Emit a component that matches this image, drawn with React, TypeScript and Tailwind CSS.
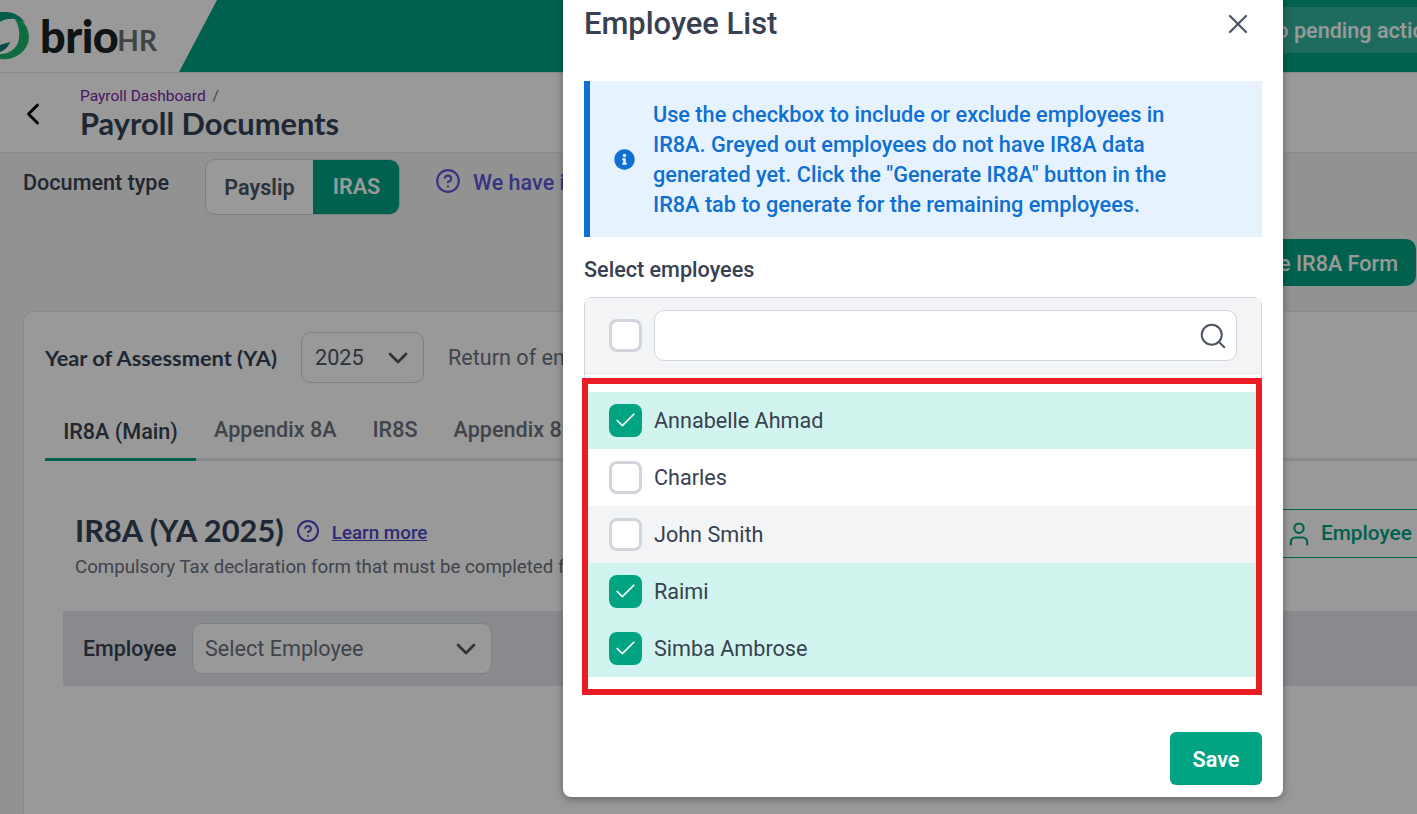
import { Check, ChevronDown, ChevronLeft, CircleHelp, Search, User, X } from "lucide-react";
import { FaInfoCircle } from "react-icons/fa";

const rows = [
  { name: "Annabelle Ahmad", on: true, bg: "bg-[#d1f5ee]" },
  { name: "Charles", on: false, bg: "bg-white" },
  { name: "John Smith", on: false, bg: "bg-[#f3f4f6]" },
  { name: "Raimi", on: true, bg: "bg-[#d1f5ee]" },
  { name: "Simba Ambrose", on: true, bg: "bg-[#d1f5ee]" },
];

function Box({ on }: { on: boolean }) {
  if (on) {
    return (
      <span className="flex h-[33px] w-[33px] shrink-0 items-center justify-center rounded-lg bg-[#00a482]">
        <Check size={25} strokeWidth={1.6} className="text-white" />
      </span>
    );
  }
  return <span className="h-[33px] w-[33px] shrink-0 rounded-lg border-[3px] border-[#d1d5db] bg-white" />;
}

function Logo() {
  return (
    <div className="flex items-center">
      <svg width="30" height="48" viewBox="0 6 30 48" className="shrink-0">
        <path d="M0 6C10 5 20 8 25 17C18 12 8 11 0 16Z" fill="#0a9a7c" />
        <path d="M14 12C26 14 31 26 28 37C24 48 12 55 0 53L0 48C10 48 18 42 19 32C20 24 18 17 14 12Z" fill="#19b56d" />
        <path d="M0 39L10 36C8 42 3 45 0 46Z" fill="#0b7a73" />
      </svg>
      <span className="ml-[10px] font-['Lato',sans-serif] text-[45px] leading-none font-black tracking-[-0.5px] text-[#1a2224]">brio</span>
      <span className="-ml-[1px] mt-[8px] font-['Lato',sans-serif] text-[28px] leading-none font-bold text-[#6b7070]">HR</span>
    </div>
  );
}

export default function App() {
  return (
    <div className="relative h-[814px] w-[1417px] overflow-hidden bg-[#f3f4f6] font-['Roboto',sans-serif]">
      <header className="flex h-[73px] border-b border-[#e5e7eb] bg-[#00a383]">
        <div className="flex h-[72px] w-[217px] shrink-0 items-center bg-white [clip-path:polygon(0_0,100%_0,82.5%_100%,0_100%)]">
          <Logo />
        </div>
        <div className="mt-[7px] ml-[1043px] flex h-[46px] w-[220px] shrink-0 items-center bg-white/20 pt-[2px] pl-[1px] text-[21.6px] font-medium whitespace-nowrap text-white">
          No pending actions
        </div>
      </header>

      <div className="flex h-[80px] items-center border-b border-[#e5e7eb] bg-white pl-[24px]">
        <ChevronLeft size={36} strokeWidth={2} className="-ml-[9px] mt-[2px] text-black" />
        <div className="mt-[3px] ml-[29px]">
          <div className="text-[15.5px] leading-[18px] text-[#7e22a8]">
            Payroll Dashboard <span className="ml-[3px] text-[#6b7280]">/</span>
          </div>
          <div className="pt-[1px] font-['Lato',sans-serif] text-[30.8px] leading-[36px] font-bold text-[#334155]">Payroll Documents</div>
        </div>
      </div>

      <div className="flex pt-[6px] pl-[23px]">
        <div className="mt-[10px] w-[182px] text-[21.6px] leading-[28px] font-medium text-[#374151]">Document type</div>
        <div className="flex h-[56px] overflow-hidden rounded-[10px] border border-[#d1d5db] bg-white pt-[1px] text-[21.6px] font-semibold">
          <div className="flex w-[107px] items-center justify-center pt-[1px] text-[#4b5563]">Payslip</div>
          <div className="-mt-[2px] -mr-px -mb-px flex w-[87px] items-center justify-center bg-[#00a482] pt-[1px] text-white">IRAS</div>
        </div>
        <CircleHelp size={26} strokeWidth={2} className="mt-[9px] ml-[35px] text-[#5f57d6]" />
        <div className="mt-[10px] ml-[12px] text-[21.6px] leading-[28px] font-medium text-[#5f57d6]">We have i</div>
      </div>

      <div className="mt-[24px] flex justify-end pr-[1px]">
        <div className="flex h-[47px] w-[220px] items-center justify-end rounded-[10px] bg-[#00a482] pt-[3px] pr-[18px] text-[21.6px] font-medium whitespace-nowrap text-white">Generate IR8A Form</div>
      </div>

      <div className="mt-[25px] ml-[23px] w-[1450px] rounded-t-[10px] border border-[#e5e7eb] bg-white pt-[20px] pl-[21px]">
        <div className="flex items-center">
          <div className="w-[256px] pt-[2px] font-['Lato',sans-serif] text-[21.8px] font-bold whitespace-nowrap text-[#334155]">Year of Assessment (YA)</div>
          <div className="flex h-[51px] w-[123px] items-center justify-between rounded-[10px] border border-[#d1d5db] pr-[9px] pl-[13px] text-[21.6px] text-[#4b5563]">
            <span className="pt-[2px]">2025</span> <ChevronDown size={32} strokeWidth={2} className="text-[#4b5563]" />
          </div>
          <div className="ml-[24px] pt-[2px] text-[21.6px] whitespace-nowrap text-[#6b7280]">Return of employee</div>
        </div>

        <div className="mt-[28px] mr-[50px] flex h-[50px] border-b-[3px] border-[#e5e7eb] pb-[8px] text-[21.6px] font-medium text-[#6b7280]">
          <div className="-mb-[11px] flex w-[151px] justify-center border-b-[3px] border-[#00a482] pt-[5px] text-[#374151]">IR8A (Main)</div>
          <div className="ml-[18px] flex items-center">Appendix 8A</div>
          <div className="ml-[36px] flex items-center">IR8S</div>
          <div className="ml-[36px] flex items-center">Appendix 8B</div>
        </div>

        <div className="mt-[48px] flex pl-[30px]">
          <div className="w-[1195px] shrink-0">
            <div className="-mt-[3px] flex h-[50px] items-center">
              <span className="font-['Lato',sans-serif] text-[30.8px] font-bold text-[#334155]">IR8A (YA 2025)</span>
              <CircleHelp size={24} strokeWidth={2} className="ml-[12px] text-[#4f46c5]" />
              <span className="ml-[12px] pt-[4px] text-[18.8px] font-medium text-[#4f46c5] underline">Learn more</span>
            </div>
            <div className="mt-[2px] text-[18.7px] leading-[18px] whitespace-nowrap text-[#6b7280]">Compulsory Tax declaration form that must be completed for</div>
          </div>
          <div className="flex h-[49px] w-[200px] shrink-0 items-center border-y border-[#00a482] pl-[15px] text-[20.8px] font-medium text-[#00a482]">
            <User size={28} strokeWidth={1.8} />
            <span className="ml-[8px]">Employee</span>
          </div>
        </div>

        <div className="mt-[35px] ml-[18px] flex h-[75px] items-center bg-[#e5e7eb] pl-[20px]">
          <div className="w-[109px] pt-[2px] text-[21.4px] font-medium text-[#374151]">Employee</div>
          <div className="flex h-[51px] w-[300px] items-center justify-between rounded-[10px] border border-[#d1d5db] bg-white pr-[9px] pl-[12px] text-[21.6px] text-[#6b7280]">
            <span className="pt-[2px]">Select Employee</span> <ChevronDown size={32} strokeWidth={2} className="text-[#4b5563]" />
          </div>
        </div>
        <div className="h-[200px]" />
      </div>

      {/* dimmed backdrop + modal */}
      <div className="absolute inset-0 bg-black/40">
        <div className="ml-[563px] flex h-[797px] w-[720px] flex-col rounded-b-lg bg-white px-[21px] shadow-[0_2px_8px_rgba(0,0,0,0.35)]">
          <div className="flex h-[48px] items-center justify-between">
            <div className="text-[30.9px] font-medium text-[#374151]">Employee List</div>
            <X size={32} strokeWidth={1.6} className="mr-[8px] text-[#4b5563]" />
          </div>

          <div className="mt-[33px] flex h-[156px] items-center border-l-[6px] border-[#0f6fd2] bg-[#e6f3ff] pl-[24px]">
            <FaInfoCircle size={21} className="shrink-0 text-[#0f6fd2]" />
            <p className="ml-[18px] w-[540px] pt-[1px] text-[21.7px] leading-[30px] font-medium text-[#0f6fd2]">
              Use the checkbox to include or exclude employees in IR8A. Greyed out employees do not have IR8A data generated yet. Click the "Generate IR8A" button in the IR8A tab to generate for the remaining employees.
            </p>
          </div>

          <div className="mt-[19px] text-[21.6px] leading-[28px] font-medium text-[#374151]">Select employees</div>

          <div className="relative mt-[13px] rounded-t-lg border-x border-t border-[#d1d5db]">
            <div className="flex h-[76px] items-center gap-[12px] border-b border-[#e5e7eb] bg-[#f3f4f6] pr-[24px] pl-[24px]">
              <Box on={false} />
              <div className="flex h-[51px] flex-1 items-center justify-end rounded-[10px] border border-[#d1d5db] bg-white pr-[8px]">
                <Search size={30} strokeWidth={1.6} className="text-[#4b5563]" />
              </div>
            </div>
            <div className="bg-white px-[3px] pt-[18px] pb-[18px]">
              {rows.map((r) => (
                <div key={r.name} className={`flex h-[57px] items-center gap-[12px] pl-[21px] ${r.bg}`}>
                  <Box on={r.on} />
                  <span className="pt-[2px] text-[21.6px] text-[#374151]">{r.name}</span>
                </div>
              ))}
            </div>
            <div className="pointer-events-none absolute top-[80px] -right-px -left-[3px] h-[317px] border-[6px] border-[#ec1c24]" />
          </div>

          <div className="mt-[37px] flex justify-end">
            <div className="flex h-[53px] w-[92px] items-center justify-center rounded-md bg-[#00a482] pt-[3px] text-[21.6px] font-semibold text-white">Save</div>
          </div>
        </div>
      </div>
    </div>
  );
}
